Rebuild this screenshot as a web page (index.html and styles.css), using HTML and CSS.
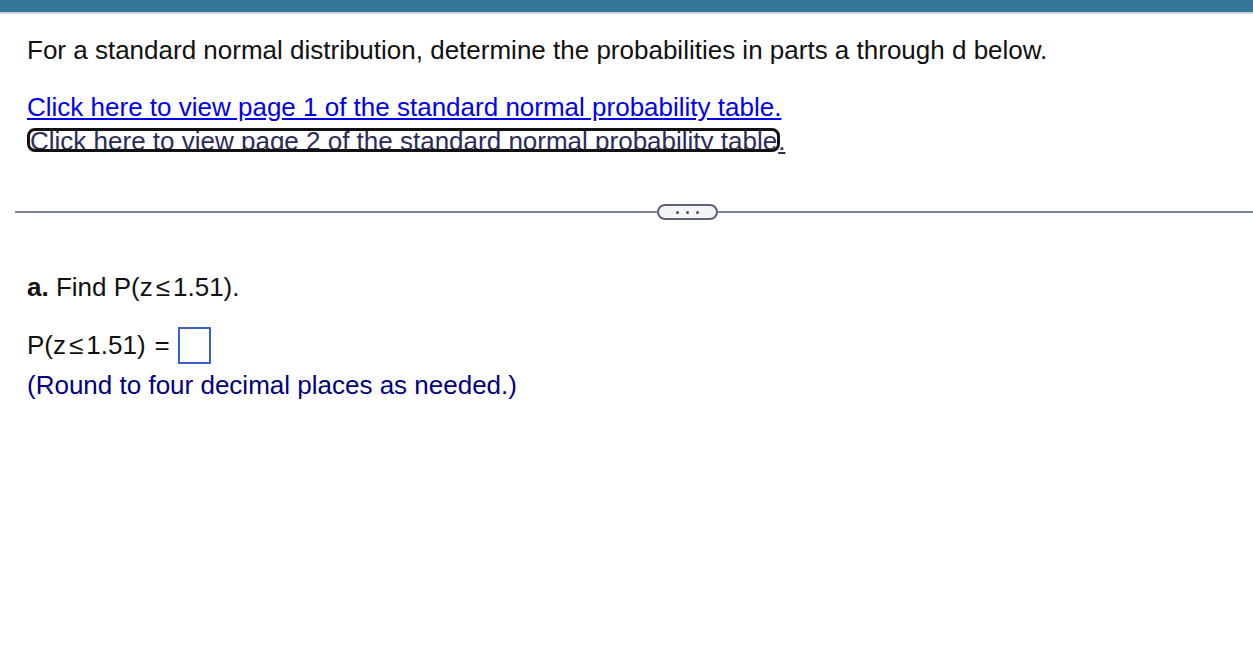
FILE: index.html
```html
<!DOCTYPE html>
<html>
<head>
<meta charset="utf-8">
<link rel="stylesheet" href="styles.css">
</head>
<body>
<div class="topbar"></div>
<div class="content">
  <p class="intro">For a standard normal distribution, determine the probabilities in parts a through d below.</p>
  <div class="links">
    <a class="link" href="#">Click here to view page 1 of the standard normal probability table.</a>
    <a class="link2" href="#"><span class="focus">Click here to view page 2 of the standard normal probability table</span><span class="dot">.</span></a>
  </div>
</div>
<div class="divider">
  <span class="line left"></span>
  <span class="pill"><i></i><i></i><i></i></span>
  <span class="line right"></span>
</div>
<div class="part">
  <p class="q"><b>a.</b> Find P(z<span class="le">≤</span>1.51).</p>
  <div class="ans">P(z<span class="le">≤</span>1.51)<span class="eq">=</span><span class="box"></span></div>
  <p class="hint">(Round to four decimal places as needed.)</p>
</div>
</body>
</html>
```
FILE: styles.css
```css
html, body { margin: 0; padding: 0; background: #fff; }
body { font-family: "Liberation Sans", Arial, sans-serif; font-size: 26px; color: #111; }
.topbar { height: 12px; background: #337595; border-bottom: 2px solid #cfd3da; }
.content { padding: 0 27px; }
.intro { margin: 21px 0 0; line-height: 30px; }
.links { margin-top: 26px; display: flex; flex-direction: column; align-items: flex-start; }
.link { color: #0000ee; line-height: 33px; height: 33px; text-decoration: underline; }
.link2 { display: flex; align-items: flex-start; height: 33px; color: #2c2c5c; text-decoration: none; }
.focus { display: block; margin: 7px 0 0 3px; height: 18px; line-height: 20px; overflow: hidden; outline: 3px solid #111; border-radius: 5px; text-decoration: underline; }
.dot { display: block; margin-top: 7px; line-height: 20px; padding-left: 1px; text-decoration: underline; }
.divider { display: flex; align-items: center; margin-top: 47px; }
.line { height: 2px; background: #7f8596; }
.left { width: 642px; margin-left: 15px; }
.right { flex: 1; }
.pill { width: 57px; height: 12px; border: 2px solid #5b6478; border-radius: 8px; background: #f4f5f7; display: flex; justify-content: center; align-items: center; gap: 7px; }
.pill i { width: 3px; height: 3px; border-radius: 50%; background: #4a5164; }
.part { padding: 0 27px; }
.q { margin: 52px 0 0; line-height: 30px; }
.le { padding: 0 3px; }
.ans { margin-top: 25px; display: flex; align-items: center; height: 37px; }
.eq { padding: 0 8px 0 9px; }
.box { width: 29px; height: 33px; border: 2px solid #3a62c8; }
.hint { margin: 6px 0 0; color: #000080; line-height: 30px; }
```
